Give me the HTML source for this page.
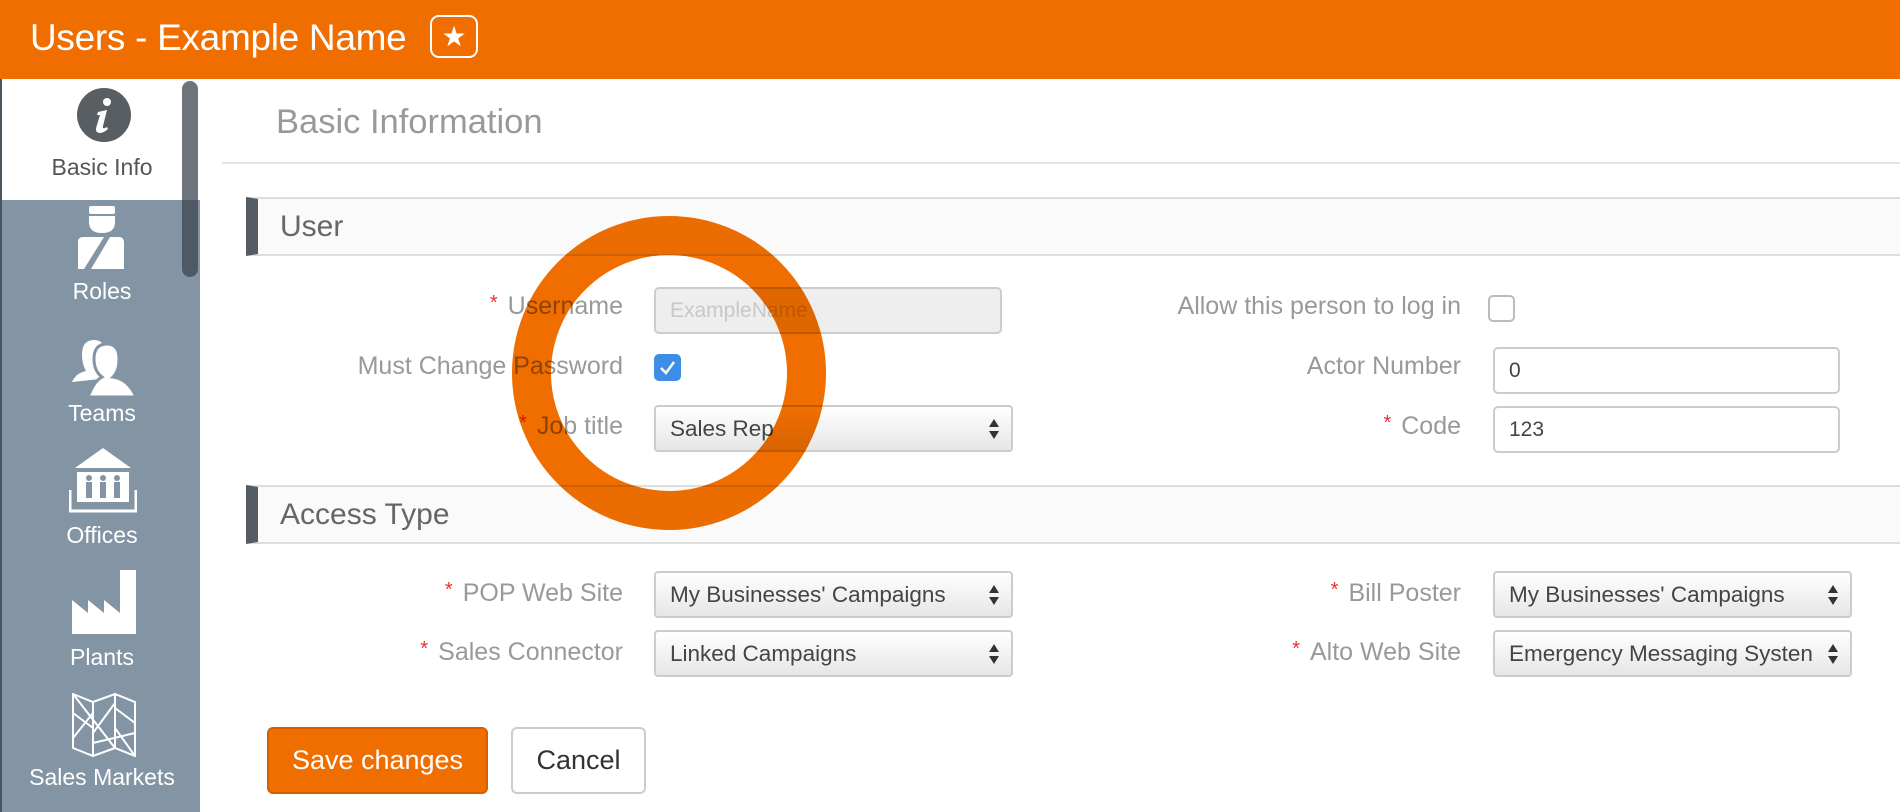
<!DOCTYPE html>
<html><head><meta charset="utf-8">
<style>
*{box-sizing:border-box;margin:0;padding:0}
body{width:1900px;height:812px;overflow:hidden;background:#fff;font-family:"Liberation Sans",sans-serif;position:relative}
.hdr{position:absolute;left:0;top:0;width:1900px;height:79px;background:#f06e00}
.hdr .t{position:absolute;left:30px;top:17px;color:#fff;font-size:37px;font-weight:300;letter-spacing:-0.3px}
.star{position:absolute;left:430px;top:15px;width:48px;height:43px;border:2px solid #fff;border-radius:9px;color:#fff;font-size:28px;text-align:center;line-height:39px}
.side{position:absolute;left:0;top:79px;width:200px;height:733px;background:#8395a4;border-left:2px solid #4a5560}
.act{position:absolute;left:0;top:0;width:200px;height:121px;background:#fff}
.lbl{position:absolute;width:200px;text-align:center;color:#fff;font-size:23px}
.scroll{position:absolute;left:182px;top:81px;width:16px;height:196px;background:rgba(60,70,80,.75);border-radius:8px}
.ph{position:absolute;left:276px;top:103px;font-size:34.5px;color:#999;font-weight:300}
.line{position:absolute;left:222px;top:162px;width:1678px;height:2px;background:#e3e3e3}
.sec{position:absolute;left:246px;width:1654px;background:#fafafa;border-top:2px solid #ddd;border-bottom:2px solid #ddd;border-left:12px solid #555c63}
.sec span{position:absolute;left:22px;color:#666;font-size:30px}
.l{position:absolute;color:#999;font-size:25px;text-align:right;white-space:nowrap}
.l b{color:#e8312c;font-weight:normal;margin-right:10px;font-size:20px;vertical-align:5px}
.in{position:absolute;border:2px solid #ccc;border-radius:5px;background:#fff;font-size:21px;color:#444;padding-left:14px;display:flex;align-items:center}
.sel{position:absolute;border:2px solid #ccc;border-radius:4px;background:linear-gradient(#fff,#e6e6e6);font-size:22.5px;color:#444;padding-left:14px;display:flex;align-items:center}
.sel:after{content:"";position:absolute;right:12px;top:50%;margin-top:-10px;width:0;height:0;border-left:5px solid transparent;border-right:5px solid transparent;border-bottom:8px solid #333;}
.sel i{position:absolute;right:12px;top:50%;margin-top:2px;width:0;height:0;border-left:5px solid transparent;border-right:5px solid transparent;border-top:8px solid #333}
.cb{position:absolute;width:27px;height:27px;border:2px solid #bbb;border-radius:5px;background:#fff}
.ring{position:absolute;left:512px;top:216px;width:314px;height:314px;border-radius:50%;border:39px solid #f06e00;mix-blend-mode:multiply}
.btn{position:absolute;top:727px;height:67px;border-radius:6px;font-size:27px;display:flex;align-items:center;justify-content:center}
</style></head><body>
<div class="hdr"><div class="t">Users - Example Name</div><div class="star">★</div></div>
<div class="side">
<div class="act"></div>
<svg style="position:absolute;left:75px;top:9px" width="54" height="54" viewBox="0 0 54 54"><circle cx="27" cy="27" r="27" fill="#595e63"/><circle cx="30" cy="14" r="4" fill="#fff"/><path d="M21 24 L30 22 L26 38 Q25 42 30 39 L31 41 Q24 47 20 44 Q18 42 20 37 L23 27 L20 27 Z" fill="#fff"/></svg>
<div class="lbl" style="top:75px;color:#555">Basic Info</div>
<svg style="position:absolute;left:76px;top:127px" width="48" height="64" viewBox="0 0 48 64"><rect x="11" y="0" width="26" height="8" rx="2" fill="#fff"/><path d="M11 10 H37 V16 Q37 27 24 27 Q11 27 11 16 Z" fill="#fff"/><path d="M5 31 H26 L6 63 H0 V36 Q0 31 5 31 Z M32 31 H41 Q46 31 46 37 V63 H13 Z" fill="#fff"/></svg>
<div class="lbl" style="top:199px">Roles</div>
<svg style="position:absolute;left:70px;top:260px" width="66" height="60" viewBox="0 0 66 60"><path d="M0 43 Q4 34 14 32 Q10 25 10 16 Q10 1 22 1 Q34 1 33 16 L28 40 Z" fill="#fff"/><path d="M22 20 Q22 5 35 5 Q47 5 47 20 Q47 32 41 38 Q56 40 64 58 H16 Q22 42 30 38 Q22 32 22 20Z" fill="#fff" stroke="#8395a4" stroke-width="3"/></svg>
<div class="lbl" style="top:321px">Teams</div>
<svg style="position:absolute;left:67px;top:369px" width="68" height="66" viewBox="0 0 68 66"><path d="M34 0 L62 20 H6 Z" fill="#fff"/><rect x="8" y="24" width="52" height="30" fill="#fff"/><g fill="#8395a4"><circle cx="20" cy="30" r="3"/><rect x="17" y="34" width="6" height="16"/><circle cx="34" cy="30" r="3"/><rect x="31" y="34" width="6" height="16"/><circle cx="48" cy="30" r="3"/><rect x="45" y="34" width="6" height="16"/></g><path d="M1 42 V63 H67 V42" fill="none" stroke="#fff" stroke-width="3"/></svg>
<div class="lbl" style="top:443px">Offices</div>
<svg style="position:absolute;left:70px;top:491px" width="64" height="64" viewBox="0 0 64 64"><path d="M0 30 L16 43 V30 L32 43 V30 L48 43 V0 H64 V64 H0 Z" fill="#fff"/></svg>
<div class="lbl" style="top:565px">Plants</div>
<svg style="position:absolute;left:70px;top:614px" width="64" height="64" viewBox="0 0 64 64" fill="none" stroke="#fff" stroke-width="2"><path d="M1 1 L21 9 L43 1 L63 9 V63 L43 55 L21 63 L1 55 Z"/><path d="M21 9 V63 M43 1 V55 M1 1 L43 55 M1 20 L21 35 M43 15 L63 30 M63 40 L21 50 M1 45 L21 20 M21 40 L43 10 M43 35 L63 63"/></svg>
<div class="lbl" style="top:685px">Sales Markets</div>
</div>
<div class="scroll"></div>

<div class="ph">Basic Information</div>
<div class="line"></div>

<div class="sec" style="top:197px;height:59px"><span style="top:11px">User</span></div>
<div class="l" style="right:1277px;top:292px"><b>*</b>Username</div>
<div class="in" style="left:654px;top:287px;width:348px;height:47px;background:#eee;color:#c8c8c8">ExampleName</div>
<div class="l" style="right:1277px;top:352px">Must Change Password</div>
<div class="cb" style="left:654px;top:354px;background:#3d8ee8;border-color:#3d8ee8"><svg width="23" height="23" viewBox="0 0 23 23" style="position:absolute;left:0;top:0"><path d="M5 12 L10 17 L18 6" fill="none" stroke="#fff" stroke-width="2.5"/></svg></div>
<div class="l" style="right:1277px;top:412px"><b>*</b>Job title</div>
<div class="sel" style="left:654px;top:405px;width:359px;height:47px">Sales Rep<i></i></div>

<div class="l" style="right:439px;top:292px">Allow this person to log in</div>
<div class="cb" style="left:1488px;top:295px"></div>
<div class="l" style="right:439px;top:352px">Actor Number</div>
<div class="in" style="left:1493px;top:347px;width:347px;height:47px">0</div>
<div class="l" style="right:439px;top:412px"><b>*</b>Code</div>
<div class="in" style="left:1493px;top:406px;width:347px;height:47px">123</div>

<div class="sec" style="top:485px;height:59px"><span style="top:11px">Access Type</span></div>
<div class="l" style="right:1277px;top:579px"><b>*</b>POP Web Site</div>
<div class="sel" style="left:654px;top:571px;width:359px;height:47px">My Businesses' Campaigns<i></i></div>
<div class="l" style="right:1277px;top:638px"><b>*</b>Sales Connector</div>
<div class="sel" style="left:654px;top:630px;width:359px;height:47px">Linked Campaigns<i></i></div>
<div class="l" style="right:439px;top:579px"><b>*</b>Bill Poster</div>
<div class="sel" style="left:1493px;top:571px;width:359px;height:47px">My Businesses' Campaigns<i></i></div>
<div class="l" style="right:439px;top:638px"><b>*</b>Alto Web Site</div>
<div class="sel" style="left:1493px;top:630px;width:359px;height:47px;overflow:hidden;white-space:nowrap">Emergency Messaging Systen<i></i></div>

<div class="btn" style="left:267px;width:221px;background:#f06e00;border:2px solid #d85f00;color:#fff">Save changes</div>
<div class="btn" style="left:511px;width:135px;background:#fff;border:2px solid #ccc;color:#333">Cancel</div>

<div class="ring"></div>
</body></html>
